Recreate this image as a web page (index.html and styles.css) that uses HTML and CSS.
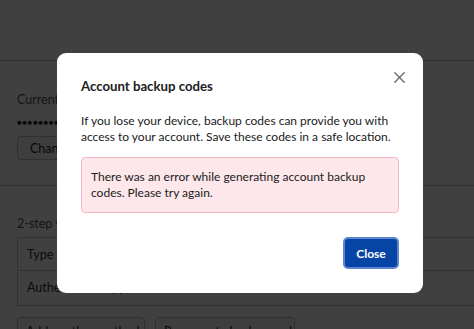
FILE: index.html
```html
<!DOCTYPE html>
<html lang="en">
<head>
<meta charset="utf-8">
<title>Account backup codes</title>
<link rel="stylesheet" href="styles.css">
</head>
<body>
<div class="page">
  <header class="page-header"></header>
  <section class="section">
    <div class="field-label">Current password</div>
    <div class="dots">&#9679;&#9679;&#9679;&#9679;&#9679;&#9679;&#9679;&#9679;&#9679;&#9679;</div>
    <button class="btn">Change password</button>
  </section>
  <section class="section section-2">
    <div class="field-label">2-step verification</div>
    <div class="table">
      <div class="row head"><div class="cell">Type</div><div class="cell">Status</div></div>
      <div class="row"><div class="cell">Authenticator app</div><div class="cell">Enabled</div></div>
    </div>
    <div class="actions">
      <button class="btn btn-wide">Add another method</button>
      <button class="btn btn-wide2">Regenerate backup codes</button>
    </div>
  </section>
</div>

<div class="overlay">
  <div class="modal" role="dialog" aria-labelledby="mt">
    <div class="modal-head">
      <h2 class="modal-title" id="mt">Account backup codes</h2>
      <button class="modal-x" aria-label="Close">
        <svg width="11" height="11" viewBox="0 0 11 11"><path d="M0.8 0.8 L10.2 10.2 M10.2 0.8 L0.8 10.2" stroke="#6b6b6b" stroke-width="1.4" stroke-linecap="round" fill="none"/></svg>
      </button>
    </div>
    <p class="modal-text">If you lose your device, backup codes can provide you with access to your account. Save these codes in a safe location.</p>
    <div class="error">There was an error while generating account backup codes. Please try again.</div>
    <div class="modal-foot">
      <button class="btn-primary">Close</button>
    </div>
  </div>
</div>
</body>
</html>
```
FILE: styles.css
```css
* { box-sizing: border-box; }
html, body { margin: 0; padding: 0; }
body {
  width: 474px;
  height: 329px;
  overflow: hidden;
  background: #fff;
  font-family: Lato, "Noto Sans", sans-serif;
  color: #222;
  font-size: 12px;
}
.page { width: 474px; height: 329px; overflow: hidden; }
.page-header {
  height: 61px;
  border-bottom: 1px solid #c8c8c8;
}
.section {
  padding: 31px 0 25px 17px;
  border-bottom: 1px solid #c8c8c8;
}
.field-label {
  color: #555;
  font-size: 12.5px;
  line-height: 16px;
}
.dots {
  margin-top: 6px;
  font-size: 8px;
  line-height: 16px;
  letter-spacing: 0.5px;
  color: #222;
}
.btn {
  display: block;
  margin-top: 6px;
  height: 24px;
  padding: 0 12px;
  border: 1px solid #bdbdbd;
  border-radius: 4px;
  background: #f7f7f7;
  font-family: inherit;
  font-size: 12.5px;
  color: #222;
  white-space: nowrap;
}
.section-2 {
  padding-top: 30px;
  border-bottom: none;
}
.table {
  margin-top: 5px;
  width: 470px;
  border: 1px solid #c8c8c8;
  border-right: none;
}
.row {
  display: grid;
  grid-template-columns: 304px 1fr;
  height: 32px;
  align-items: center;
}
.row + .row {
  border-top: 1px solid #c8c8c8;
  height: 35px;
  padding-bottom: 1px;
}
.cell {
  padding: 0 9px;
  font-size: 12.5px;
  color: #333;
  white-space: nowrap;
}
.actions {
  display: flex;
  gap: 10px;
  margin-top: 11px;
}
.actions .btn { margin-top: 0; height: 28px; padding: 0 8px; }
.btn-wide { width: 128px; }
.btn-wide2 { width: 140px; }

.overlay {
  position: fixed;
  inset: 0;
  background: rgba(0, 0, 0, 0.75);
  display: flex;
  align-items: flex-start;
  justify-content: flex-start;
  padding: 53px 0 0 57px;
}
.modal {
  width: 366px;
  background: #fff;
  border-radius: 9px;
  padding: 24px;
}
.modal-head {
  display: flex;
  align-items: flex-start;
  justify-content: space-between;
}
.modal-title {
  margin: 0;
  font-size: 13.2px;
  line-height: 18px;
  font-weight: 700;
  color: #202122;
}
.modal-x {
  width: 21px;
  height: 21px;
  margin: -10px -11px 0 0;
  padding: 0;
  border: none;
  background: transparent;
  display: flex;
  align-items: center;
  justify-content: center;
}
.modal-text {
  margin: 18px 0 0;
  font-size: 12px;
  line-height: 16px;
  color: #202122;
}
.error {
  margin-top: 12px;
  padding: 11px 9px 11px 9px;
  background: #fde7ea;
  border: 1px solid #f2b6c3;
  border-radius: 4px;
  font-size: 12px;
  line-height: 16px;
  color: #202122;
}
.modal-foot {
  display: flex;
  justify-content: flex-end;
  margin-top: 24px;
}
.btn-primary {
  width: 56px;
  height: 32px;
  padding: 0;
  border: 2px solid #5d86cf;
  border-radius: 5px;
  background: #0645a6;
  color: #fff;
  font-family: inherit;
  font-size: 12px;
  font-weight: 700;
}
```
